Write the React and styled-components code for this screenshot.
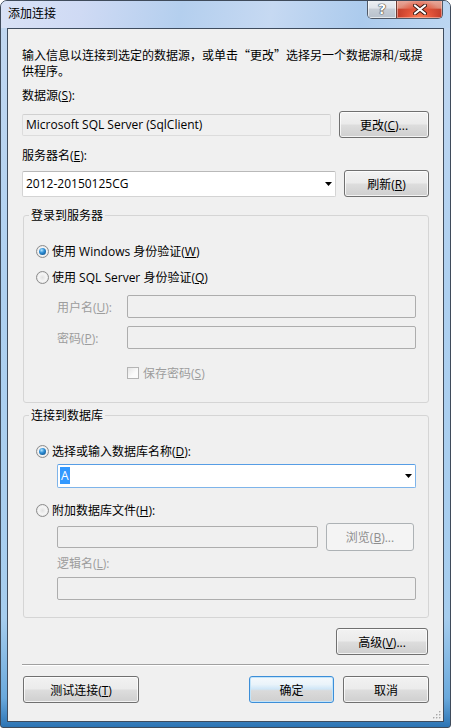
import styled, { createGlobalStyle } from "styled-components";

const GlobalStyle = createGlobalStyle`
  html, body { margin: 0; padding: 0; }
  body {
    font-family: "Open Sans", "Noto Sans CJK SC", sans-serif;
    font-size: 12px;
    color: #000;
    background: #ffffff;
  }
  * { box-sizing: border-box; }
`;

const Window = styled.div`
  width: 451px;
  height: 728px;
  display: flex;
  flex-direction: column;
  border: 1px solid #3f4b5b;
  border-radius: 7px 7px 3px 3px;
  overflow: hidden;
  background: linear-gradient(
    180deg,
    #c3d8f1 0%,
    #aed0f0 40%,
    #a6cdee 85%,
    #6aa9dc 96%,
    #2c74b4 100%
  );
`;

const TitleBar = styled.div`
  height: 27px;
  flex: none;
  display: flex;
  align-items: flex-start;
  background: linear-gradient(
    100deg,
    #d9e2f6 0%,
    #cfdaf4 18%,
    #b4cfee 40%,
    #c6d9f2 60%,
    #accbed 80%,
    #bcd6f1 100%
  );
`;

const Title = styled.div`
  flex: 1;
  padding: 5px 0 0 7px;
  line-height: 16px;
`;

const Caption = styled.div`
  display: flex;
  height: 19px;
  margin: -1px 7px 0 0;
  border: 1px solid #4f5866;
  border-top: none;
  border-radius: 0 0 5px 5px;
  overflow: hidden;
`;

const HelpButton = styled.div`
  width: 28px;
  display: flex;
  align-items: center;
  justify-content: center;
  background: linear-gradient(#eef1f5 0%, #dfe4ea 45%, #c6cdd6 50%, #b8c1cc 100%);
  box-shadow: inset 0 0 0 1px rgba(255, 255, 255, 0.6);
  color: #fff;
  font: bold 14px "DejaVu Sans", sans-serif;
  text-shadow: 0 0 1px #333, 0 0 1px #333, 0 0 1px #333;
`;

const CloseButton = styled.div`
  width: 46px;
  display: flex;
  align-items: center;
  justify-content: center;
  border-left: 1px solid #6b3a32;
  background: radial-gradient(ellipse at 50% 115%, #ff8a5c 0%, #e4553a 40%, rgba(200, 60, 40, 0) 75%),
    linear-gradient(#eaaa9d 0%, #dd8b78 45%, #c7432f 52%, #bb3322 100%);
  box-shadow: inset 0 0 0 1px rgba(255, 220, 210, 0.5);
`;

const Frame = styled.div`
  flex: 1;
  display: flex;
  padding: 0 6px 5px;
`;

const Client = styled.div`
  flex: 1;
  position: relative;
  display: flex;
  flex-direction: column;
  background: #f0f0f0;
  border: 1px solid #3e4c5e;
  padding: 18px 14px 0 14px;
`;

// the paragraph is all CJK, so it takes the CJK face whole (full-width quotes)
const Desc = styled.p`
  margin: 0;
  font-family: "Noto Sans CJK SC", sans-serif;
  line-height: 16px;
  white-space: nowrap;
`;

const Label = styled.div`
  line-height: 15px;
  margin-top: ${(p) => p.$mt ?? 0}px;
  margin-left: ${(p) => p.$ml ?? 0}px;
  color: ${(p) => (p.$disabled ? "#9d9d9d" : "#000")};
  white-space: nowrap;
`;

const Row = styled.div`
  display: flex;
  align-items: center;
  justify-content: ${(p) => p.$justify ?? "flex-start"};
  gap: ${(p) => p.$gap ?? 8}px;
  height: ${(p) => p.$h}px;
  margin-top: ${(p) => p.$mt ?? 0}px;
  margin-left: ${(p) => p.$ml ?? 0}px;
  padding-right: ${(p) => p.$pr ?? 0}px;
`;

const boxColors = {
  normal: { bg: "#ffffff", border: "#d4d4d4", top: "#b9b9b9" },
  readOnly: { bg: "#f0f0f0", border: "#dcdcdc", top: "#d0d0d0" },
  disabled: { bg: "#f0f0f0", border: "#adadad", top: "#adadad" },
  focused: { bg: "#ffffff", border: "#7eb4ea", top: "#569de5" },
};

const TextBox = styled.div`
  flex: ${(p) => (p.$w ? "none" : 1)};
  width: ${(p) => (p.$w ? `${p.$w}px` : "auto")};
  height: ${(p) => p.$h}px;
  display: flex;
  align-items: center;
  padding: 0 3px;
  background: ${(p) => boxColors[p.$kind].bg};
  border: 1px solid ${(p) => boxColors[p.$kind].border};
  border-top-color: ${(p) => boxColors[p.$kind].top};
  border-radius: 2px;
  white-space: nowrap;
`;

const BoxText = styled.span`
  flex: 1;
`;

const Selected = styled.span`
  margin-left: -1px;
  padding: 0 1px;
  line-height: 18px;
  background: #3399ff;
  color: #fff;
`;

const Button = styled.button`
  flex: none;
  width: ${(p) => p.$w}px;
  height: ${(p) => p.$h ?? 27}px;
  margin-left: ${(p) => p.$ml ?? 0}px;
  padding: 0;
  font: inherit;
  font-size: 12px;
  color: #000;
  border: 1px solid #707070;
  border-radius: 3px;
  background: linear-gradient(#f2f2f2 0%, #ebebeb 48%, #dddddd 52%, #cfcfcf 100%);
  box-shadow: inset 0 0 0 1px rgba(255, 255, 255, 0.75);

  &:disabled {
    color: #8e8e8e;
    border-color: #adb2b5;
    background: #f4f4f4;
    box-shadow: none;
  }

  ${(p) =>
    p.$primary &&
    `
    border-color: #3c8ed8;
    background: linear-gradient(#f5f9fc 0%, #e9f3fa 30%, #cfe6f7 48%, #dadada 55%, #cfcfcf 100%);
    box-shadow: inset 0 0 0 1px #c2e4fa;
  `}
`;

const Group = styled.fieldset`
  display: flex;
  flex-direction: column;
  min-width: 0;
  margin: ${(p) => p.$mt}px 0 0 1px;
  padding: 20px 12px ${(p) => p.$pb}px;
  border: 1px solid #d5d5d5;
  border-radius: 3px;
`;

const Legend = styled.legend`
  margin-left: -7px;
  padding: 0 2px;
  line-height: 15px;
`;

const Radio = styled.span`
  flex: none;
  width: 13px;
  height: 13px;
  margin-right: 3px;
  display: flex;
  align-items: center;
  justify-content: center;
  border-radius: 50%;
  border: 1px solid #8c8c8c;
  background: radial-gradient(circle, #e2e2e2 0%, #f6f6f6 50%, #d2d2d2 100%);
`;

const RadioDot = styled.span`
  width: 7px;
  height: 7px;
  border-radius: 50%;
  background: radial-gradient(circle at 38% 32%, #b5e6ff 0%, #2f8fd6 40%, #0c4a82 95%);
`;

const Choice = styled.div`
  display: flex;
  align-items: center;
  height: 16px;
  margin-top: ${(p) => p.$mt ?? 0}px;
  margin-left: ${(p) => p.$ml ?? 0}px;
  color: ${(p) => (p.$disabled ? "#9d9d9d" : "#000")};
  white-space: nowrap;
`;

const CheckBox = styled.span`
  flex: none;
  width: 12px;
  height: 12px;
  margin-right: 4px;
  border: 1px solid #b4b4b4;
  background: linear-gradient(135deg, #e6e6e6 0%, #fbfbfb 60%);
`;

const FieldLabel = styled.span`
  width: 70px;
  flex: none;
  color: #9d9d9d;
`;

const Divider = styled.div`
  height: 1px;
  margin-top: 9px;
  background: #a0a0a0;
  box-shadow: 0 1px 0 #ffffff;
`;

const Spacer = styled.div`
  flex: 1;
`;

const Grip = styled.svg`
  position: absolute;
  right: 2px;
  bottom: 2px;
`;

const DropArrow = () => (
  <svg width="7" height="4" viewBox="0 0 7 4">
    <polygon points="0,0 7,0 3.5,4" fill="#000" />
  </svg>
);

const RadioButton = ({ checked, children, mt }) => (
  <Choice $mt={mt}>
    <Radio>{checked && <RadioDot />}</Radio>
    {children}
  </Choice>
);

export default function App() {
  return (
    <>
      <GlobalStyle />
      <Window>
        <TitleBar>
          <Title>添加连接</Title>
          <Caption>
            <HelpButton>?</HelpButton>
            <CloseButton>
              <svg width="14" height="11" viewBox="0 0 14 11">
                <path d="M2 1.5 L12 9.5 M12 1.5 L2 9.5" stroke="#3a1a14" strokeWidth="4" strokeLinecap="round" />
                <path d="M2 1.5 L12 9.5 M12 1.5 L2 9.5" stroke="#ffffff" strokeWidth="2.2" strokeLinecap="round" />
              </svg>
            </CloseButton>
          </Caption>
        </TitleBar>
        <Frame>
          <Client>
            <Desc>
              输入信息以连接到选定的数据源，或单击“更改”选择另一个数据源和/或提
              <br />
              供程序。
            </Desc>
            <Label $mt={9}>
              数据源(<u>S</u>):
            </Label>
            <Row $h={27} $mt={8}>
              <TextBox $kind="readOnly" $h={22}>
                Microsoft SQL Server (SqlClient)
              </TextBox>
              <Button $w={90}>
                更改(<u>C</u>)...
              </Button>
            </Row>
            <Label $mt={10}>
              服务器名(<u>E</u>):
            </Label>
            <Row $h={27} $mt={7}>
              <TextBox $kind="normal" $h={26}>
                <BoxText>2012-20150125CG</BoxText>
                <DropArrow />
              </TextBox>
              <Button $w={85}>
                刷新(<u>R</u>)
              </Button>
            </Row>

            <Group $mt={11} $pb={21}>
              <Legend>登录到服务器</Legend>
              <RadioButton checked>
                使用 Windows 身份验证(<u>W</u>)
              </RadioButton>
              <RadioButton mt={10}>
                使用 SQL Server 身份验证(<u>Q</u>)
              </RadioButton>
              <Row $h={23} $mt={10} $ml={21} $gap={0}>
                <FieldLabel>
                  用户名(<u>U</u>):
                </FieldLabel>
                <TextBox $kind="disabled" $h={23} />
              </Row>
              <Row $h={23} $mt={8} $ml={21} $gap={0}>
                <FieldLabel>
                  密码(<u>P</u>):
                </FieldLabel>
                <TextBox $kind="disabled" $h={23} />
              </Row>
              <Choice $mt={16} $ml={91} $disabled>
                <CheckBox />
                保存密码(<u>S</u>)
              </Choice>
            </Group>

            <Group $mt={5} $pb={17}>
              <Legend>连接到数据库</Legend>
              <RadioButton checked>
                选择或输入数据库名称(<u>D</u>):
              </RadioButton>
              <Row $h={24} $mt={5} $ml={21}>
                <TextBox $kind="focused" $h={24}>
                  <BoxText>
                    <Selected>A</Selected>
                  </BoxText>
                  <DropArrow />
                </TextBox>
              </Row>
              <RadioButton mt={14}>
                附加数据库文件(<u>H</u>):
              </RadioButton>
              <Row $h={28} $mt={5} $ml={21} $pr={2}>
                <TextBox $kind="disabled" $h={22} />
                <Button $w={88} $h={28} disabled>
                  浏览(<u>B</u>)...
                </Button>
              </Row>
              <Label $mt={5} $ml={21} $disabled>
                逻辑名(<u>L</u>):
              </Label>
              <Row $h={23} $mt={6} $ml={21}>
                <TextBox $kind="disabled" $h={23} />
              </Row>
            </Group>

            <Row $h={27} $mt={10} $justify="flex-end" $pr={1}>
              <Button $w={92}>
                高级(<u>V</u>)...
              </Button>
            </Row>
            <Divider />
            <Row $h={27} $mt={11} $gap={0}>
              <Button $w={116} $ml={1}>
                测试连接(<u>T</u>)
              </Button>
              <Spacer />
              <Button $w={85} $primary>
                确定
              </Button>
              <Button $w={86} $ml={9}>
                取消
              </Button>
            </Row>

            <Grip width="9" height="9" viewBox="0 0 9 9">
              {[
                [7, 1],
                [4, 4],
                [7, 4],
                [1, 7],
                [4, 7],
                [7, 7],
              ].map(([x, y]) => (
                <g key={`${x}-${y}`}>
                  <rect x={x + 0.5} y={y + 0.5} width="1.5" height="1.5" fill="#ffffff" />
                  <rect x={x} y={y} width="1.5" height="1.5" fill="#a8a8a8" />
                </g>
              ))}
            </Grip>
          </Client>
        </Frame>
      </Window>
    </>
  );
}
